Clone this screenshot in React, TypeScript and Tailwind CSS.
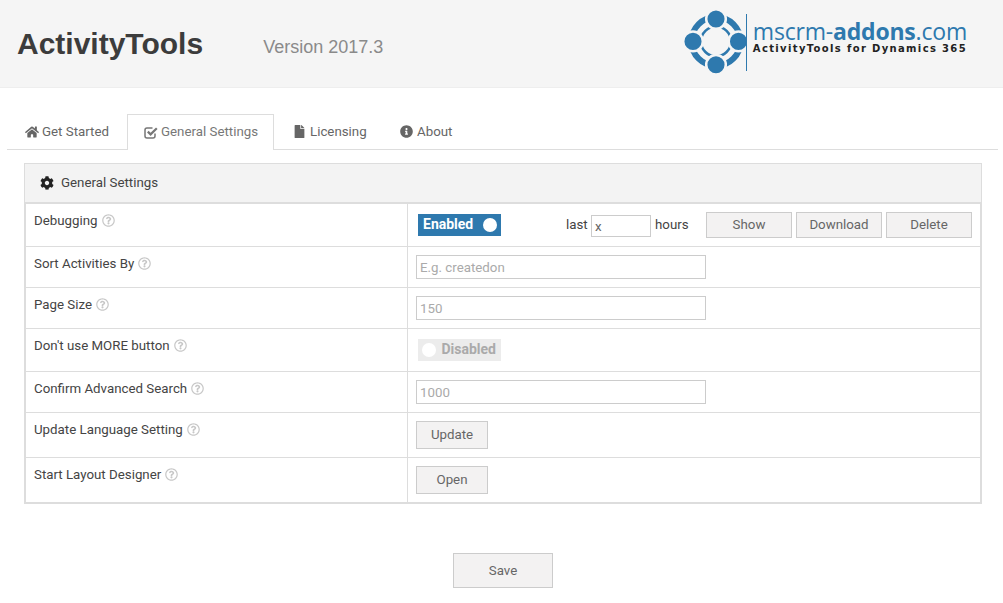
import { FaHome, FaFile, FaInfoCircle, FaCog, FaRegQuestionCircle } from 'react-icons/fa'
import type { ReactNode } from 'react'

function Logo() {
  return (
    <div className="flex items-start pt-[8px] mr-[36px]">
      <svg width="66" height="70" viewBox="4 0 66 70">
        <g fill="none" stroke="#2e79ae">
          <circle cx="36" cy="33.4" r="24.5" strokeWidth="6" />
          <circle cx="36" cy="33.4" r="15" strokeWidth="2.5" />
        </g>
        <g fill="#2e79ae" stroke="#f5f5f5" strokeWidth="2.5">
          <circle cx="36" cy="11" r="9.8" />
          <circle cx="13" cy="33.4" r="9.8" />
          <circle cx="58.5" cy="33.4" r="9.8" />
          <circle cx="36" cy="56.7" r="9.8" />
        </g>
      </svg>
      <div className="w-px h-[57px] bg-[#2e79ae] ml-[-4px] mt-[6px]" />
      <div className="ml-[6px] mt-[10px] font-['Open_Sans',sans-serif]">
        <div className="text-[23px] leading-[26px] text-[#2e79ae] tracking-[-0.2px]">
          mscrm-<span className="font-bold">addons</span>.com
        </div>
        <div className="text-[10px] leading-[10px] font-bold text-[#222] tracking-[1.35px] font-['DejaVu_Sans',sans-serif]">
          ActivityTools for Dynamics 365
        </div>
      </div>
    </div>
  )
}

function CheckIcon() {
  return (
    <svg width="14" height="13" viewBox="0 0 14 13" fill="none" stroke="#777">
      <path d="M11 7.5 V10 A2 2 0 0 1 9 12 H3 A2 2 0 0 1 1 10 V4 A2 2 0 0 1 3 2 H8.5" strokeWidth="1.5" />
      <path d="M3.8 5.6 L6.6 8.4 L12.8 2.2" strokeWidth="2.2" />
    </svg>
  )
}

function Tab({ icon, label, active, size }: { icon: ReactNode; label: string; active?: boolean; size: string }) {
  return (
    <div
      className={
        active
          ? `h-[36px] mb-[-1px] pb-[1px] pl-[16px] flex items-center border border-b-0 border-[#ddd] bg-white text-[#777] ${size}`
          : `h-[35px] pl-[17px] flex items-center text-[#666] ${size}`
      }
    >
      <span className="w-[17px] shrink-0 flex items-center">{icon}</span>
      <span>{label}</span>
    </div>
  )
}

function Help() {
  return <FaRegQuestionCircle className="inline-block ml-[4px] text-[13px] text-[#c8c8c8] align-[-2px]" />
}

function Row({ label, h, last, pad, children }: { label: string; h: string; last?: boolean; pad: string; children: ReactNode }) {
  return (
    <div className={`flex ${h} ${last ? '' : 'border-b border-[#ddd]'}`}>
      <div className="w-[382px] shrink-0 border-r border-[#ddd] pl-[8px] pt-[7px] leading-[20px] text-[#444]">
        {label}
        <Help />
      </div>
      <div className={`flex-1 pl-[8px] ${pad}`}>{children}</div>
    </div>
  )
}

const input = 'block w-[290px] h-[24px] border border-[#ccc] bg-white px-[3px] leading-[24px] text-[#aaa]'
const btn = 'flex items-center justify-center h-[26px] border border-[#ccc] bg-[#f3f2f2] text-[#666]'

export default function App() {
  return (
    <div className="w-[1003px] h-[603px] overflow-hidden bg-white font-['Roboto',sans-serif] text-[13.3px] text-[#444]">
      {/* Header */}
      <div className="h-[88px] bg-[#f5f5f5] border-b border-[#eee] flex justify-between">
        <div className="flex items-start">
          <h1 className="ml-[17px] mt-[25px] font-['Liberation_Sans',sans-serif] font-bold text-[30px] leading-[38px] text-[#3c3c3c]">
            ActivityTools
          </h1>
          <div className="ml-[60px] mt-[36px] font-['Liberation_Sans',sans-serif] text-[18px] leading-[22px] text-[#8a8a8a]">Version 2017.3</div>
        </div>
        <Logo />
      </div>

      {/* Tabs */}
      <div className="mt-[26px] mx-[7px] w-[991px] h-[36px] flex items-end border-b border-[#ddd] pl-[1px]">
        <Tab size="w-[119px]" icon={<FaHome className="text-[#666] text-[14px]" />} label="Get Started" />
        <Tab size="w-[147px] mr-[2px]" active icon={<CheckIcon />} label="General Settings" />
        <Tab size="w-[107px]" icon={<FaFile className="text-[#666] text-[13px]" />} label="Licensing" />
        <Tab size="w-[90px]" icon={<FaInfoCircle className="text-[#666] text-[13px]" />} label="About" />
      </div>

      {/* Panel */}
      <div className="mt-[13px] mx-[24px] w-[958px] border border-[#ddd]">
        <div className="h-[38px] bg-[#f3f3f3] flex items-center gap-[7px] pl-[15px] text-[#444]">
          <FaCog className="text-[#222] text-[14px]" />
          <span>General Settings</span>
        </div>
        <div className="border-x border-b border-t-2 border-[#ddd]">
          <Row label="Debugging" h="h-[43px]" pad="pt-[8px] flex items-start">
            <div className="mt-[2px] ml-[2px] w-[83px] h-[22px] bg-[#2e79ae] flex items-center justify-between pl-[5px] pr-[3px] text-white font-bold text-[14px]">
              <span className="mt-[-1px]">Enabled</span>
              <span className="w-[14px] h-[14px] rounded-full bg-white mr-[1px]" />
            </div>
            <span className="w-[25px] ml-[65px] mt-[3px] leading-[20px] text-[#444]">last</span>
            <div className="mt-[3px] w-[60px] h-[22px] border border-[#ccc] px-[3px] leading-[22px] text-[#666]">x</div>
            <span className="w-[51px] ml-[4px] mt-[3px] leading-[20px] text-[#444]">hours</span>
            <div className={`${btn} w-[86px]`}>Show</div>
            <div className={`${btn} ml-[4px] w-[86px]`}>Download</div>
            <div className={`${btn} ml-[4px] w-[86px]`}>Delete</div>
          </Row>
          <Row label="Sort Activities By" h="h-[41px]" pad="pt-[8px]">
            <div className={input}>E.g. createdon</div>
          </Row>
          <Row label="Page Size" h="h-[41px]" pad="pt-[8px]">
            <div className={input}>150</div>
          </Row>
          <Row label="Don't use MORE button" h="h-[43px]" pad="pt-[10px]">
            <div className="ml-[2px] w-[83px] h-[22px] bg-[#ececec] flex items-center justify-between pl-[4px] pr-[5px] text-[#aaa] font-bold text-[14px]">
              <span className="w-[14px] h-[14px] rounded-full bg-white" />
              <span className="mt-[-1px]">Disabled</span>
            </div>
          </Row>
          <Row label="Confirm Advanced Search" h="h-[41px]" pad="pt-[8px]">
            <div className={input}>1000</div>
          </Row>
          <Row label="Update Language Setting" h="h-[45px]" pad="pt-[8px]">
            <div className={`${btn} w-[72px] h-[28px]`}>Update</div>
          </Row>
          <Row label="Start Layout Designer" h="h-[44px]" last pad="pt-[8px]">
            <div className={`${btn} w-[72px] h-[28px]`}>Open</div>
          </Row>
        </div>
      </div>

      {/* Save */}
      <div className="mt-[49px] ml-[453px]">
        <div className={`${btn} w-[100px] h-[35px]`}>Save</div>
      </div>
    </div>
  )
}
